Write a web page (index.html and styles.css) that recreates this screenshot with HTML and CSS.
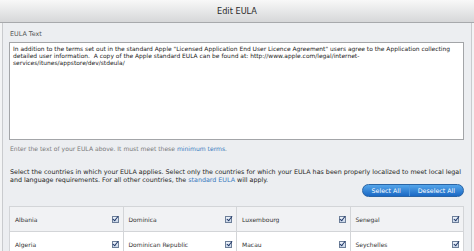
FILE: index.html
```html
<!DOCTYPE html>
<html lang="en">
<head>
  <meta charset="UTF-8" />
  <title>Edit EULA</title>
  <link rel="stylesheet" href="styles.css">
</head>
<body>

  <header>
    <h1>Edit EULA</h1>
  </header>

  <div class="panel">
    <label class="field-label">EULA Text</label>
    <div class="eula-box">In addition to the terms set out in the standard Apple "Licensed Application End User Licence Agreement" users agree to the Application collecting detailed user information.&nbsp; A copy of the Apple standard EULA can be found at: http://www.apple.com/legal/internet-services/itunes/appstore/dev/stdeula/</div>

    <p class="hint">Enter the text of your EULA above. It must meet these <a href="#">minimum terms</a>.</p>

    <p class="intro">Select the countries in which your EULA applies. Select only the countries for which your EULA has been properly localized to meet local legal and language requirements. For all other countries, the <a href="#">standard EULA</a> will apply.</p>

    <div class="actions">
      <div class="pill">
        <button>Select All</button>
        <button>Deselect All</button>
      </div>
    </div>

    <div class="countries">
      <div class="cell"><span>Albania</span><i class="check"></i></div>
      <div class="cell"><span>Dominica</span><i class="check"></i></div>
      <div class="cell"><span>Luxembourg</span><i class="check"></i></div>
      <div class="cell"><span>Senegal</span><i class="check"></i></div>
      <div class="cell alt"><span>Algeria</span><i class="check"></i></div>
      <div class="cell alt"><span>Dominican Republic</span><i class="check"></i></div>
      <div class="cell alt"><span>Macau</span><i class="check"></i></div>
      <div class="cell alt"><span>Seychelles</span><i class="check"></i></div>
    </div>
  </div>

</body>
</html>
```

FILE: styles.css
```css
body {
  margin: 0;
  font-family: 'DejaVu Sans', sans-serif;
  background: #f3f4f5;
  color: #333;
  overflow: hidden;
}

header {
  box-sizing: border-box;
  height: 23px;
  background: linear-gradient(#f8f8f8, #d6d7d9);
  border-bottom: 1px solid #a7a9ac;
  text-align: center;
}

header h1 {
  margin: 0;
  font-size: 8.2px;
  font-weight: normal;
  line-height: 22px;
  color: #2a2a2a;
}

.panel {
  margin: 0 2px;
  padding: 7px 7px 0 6px;
  background: #eceef1;
  border-left: 1px solid #c9cbce;
  border-right: 1px solid #c9cbce;
  height: 228px;
}

.field-label {
  display: block;
  font-size: 6.4px;
  color: #555;
  margin: 0 0 3px 1px;
  line-height: 9px;
}

.eula-box {
  box-sizing: border-box;
  height: 98px;
  background: #fff;
  border: 1px solid #a3a5a8;
  padding: 2px 3px;
  font-size: 5.95px;
  line-height: 7.2px;
  color: #222;
}

.hint {
  margin: 4px 0 0 1px;
  font-size: 6.05px;
  color: #7a7a7a;
  line-height: 9px;
}

a {
  color: #3a7bc0;
  text-decoration: none;
}

.intro {
  margin: 15px 0 0 1px;
  font-size: 6.35px;
  line-height: 8px;
  color: #1e1e1e;
}

.actions {
  display: flex;
  justify-content: flex-end;
}

.pill {
  display: flex;
  height: 13px;
  border-radius: 7px;
  overflow: hidden;
  background: linear-gradient(#54a5ea, #1a68c4);
  border: 1px solid #2a64a4;
  box-sizing: border-box;
}

.pill button {
  border: 0;
  background: none;
  color: #fff;
  font-family: 'DejaVu Sans', sans-serif;
  font-size: 6.3px;
  padding: 0 8px 0 9px;
  cursor: pointer;
}

.pill button + button {
  border-left: 1px solid #4f97dd;
  padding: 0 8px;
}

.countries {
  margin-top: 9px;
  display: grid;
  grid-template-columns: repeat(4, 1fr);
  border-top: 1px solid #d3d5d8;
  border-left: 1px solid #d3d5d8;
}

.cell {
  height: 24px;
  display: flex;
  align-items: center;
  justify-content: space-between;
  padding: 0 4px 0 5px;
  background: #f1f2f4;
  border-right: 1px solid #d3d5d8;
  border-bottom: 1px solid #d3d5d8;
  font-size: 6px;
  color: #333;
}

.cell.alt {
  background: #fff;
}

.check {
  width: 5px;
  height: 5px;
  border: 1px solid #6d7f99;
  background: linear-gradient(#eef3fa, #c9d6e8);
  position: relative;
}

.check::after {
  content: "";
  position: absolute;
  left: 1.5px;
  top: -2px;
  width: 2px;
  height: 5px;
  border-right: 1.5px solid #1d3566;
  border-bottom: 1.5px solid #1d3566;
  transform: rotate(38deg);
}
```
